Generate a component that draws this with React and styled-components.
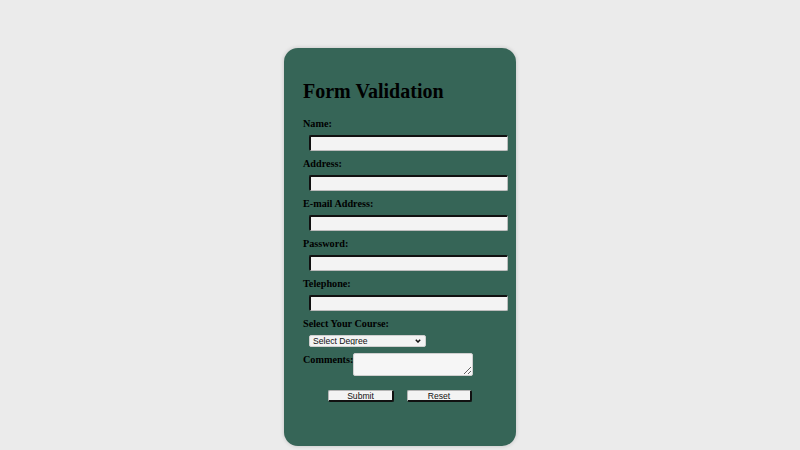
import React from "react"
import styled, { createGlobalStyle } from "styled-components"

const GlobalStyle = createGlobalStyle`
  html, body {
    margin: 0;
    padding: 0;
    background: #ebebeb;
  }
  body {
    font-family: "Liberation Serif", "Times New Roman", serif;
  }
`;

const Page = styled.div`
  display: flex;
  justify-content: center;
  padding-top: 48px;
  height: 450px;
  box-sizing: border-box;
  overflow: hidden;
`;

const Card = styled.form`
  width: 232px;
  height: 398px;
  box-sizing: border-box;
  background: #366557;
  border-radius: 14px;
  box-shadow: 0 0 4px rgba(0, 0, 0, 0.18);
  padding: 32px 8px 0 19px;
  display: flex;
  flex-direction: column;
`;

const Title = styled.h1`
  margin: 0 0 15px;
  font-size: 20px;
  line-height: 23px;
  font-weight: bold;
  color: #000;
`;

const Label = styled.label`
  display: block;
  font-size: 10.2px;
  line-height: 12px;
  font-weight: bold;
  color: #000;
  margin-bottom: 5px;
`;

const TextInput = styled.input`
  display: block;
  box-sizing: border-box;
  width: 199px;
  height: 16px;
  margin: 0 0 7px 6px;
  padding: 0 3px;
  background: #f3f3f3;
  border-style: solid;
  border-width: 2px 1px 1px 2px;
  border-color: #111 #bdbdbd #bdbdbd #111;
  border-radius: 2px;
  font-size: 9px;
`;

const SelectWrap = styled.div`
  position: relative;
  width: 117px;
  height: 12px;
  margin: 0 0 6px 6px;
`;

const Select = styled.select`
  display: block;
  box-sizing: border-box;
  width: 100%;
  height: 100%;
  margin: 0;
  padding: 0 0 0 3px;
  appearance: none;
  background: #f3f3f3;
  border: 1px solid #cfcfcf;
  border-radius: 2px;
  font-family: "Liberation Sans", Arial, sans-serif;
  font-size: 8.6px;
  line-height: 1;
  color: #111;
`;

const Chevron = styled.svg`
  position: absolute;
  right: 5px;
  top: 4px;
  width: 6px;
  height: 4px;
  pointer-events: none;
`;

const CommentRow = styled.div`
  display: flex;
  align-items: flex-start;
`;

const InlineLabel = styled(Label)`
  margin: 0;
  padding-top: 1px;
`;

const TextArea = styled.textarea`
  box-sizing: border-box;
  width: 120px;
  height: 23px;
  margin: 0;
  background: #f6f6f6;
  border: 1px solid #cfcfcf;
  border-radius: 2px;
`;

const Buttons = styled.div`
  display: flex;
  justify-content: center;
  gap: 13px;
  margin-top: 14px;
  padding-right: 11px;
`;

const Button = styled.button`
  box-sizing: border-box;
  width: ${(p) => p.$w}px;
  height: 12px;
  padding: 0;
  background: #f3f3f3;
  border-style: solid;
  border-width: 1px 2px 2px 1px;
  border-color: #b5b5b5 #111 #111 #b5b5b5;
  border-radius: 2px;
  font-family: "Liberation Sans", Arial, sans-serif;
  font-size: 8.6px;
  line-height: 8px;
  color: #111;
`;

const fields = ["Name:", "Address:", "E-mail Address:", "Password:", "Telephone:"];

export default function App() {
  return (
    <>
      <GlobalStyle />
      <Page>
        <Card onSubmit={(e) => e.preventDefault()}>
          <Title>Form Validation</Title>
          {fields.map((f) => (
            <div key={f}>
              <Label>{f}</Label>
              <TextInput type={f === "Password:" ? "password" : "text"} />
            </div>
          ))}
          <Label>Select Your Course:</Label>
          <SelectWrap>
            <Select defaultValue="">
              <option value="">Select Degree</option>
              <option>B.Tech</option>
              <option>M.Tech</option>
            </Select>
            <Chevron viewBox="0 0 6 4">
              <path d="M0.8 0.8 L3 3 L5.2 0.8" fill="none" stroke="#111" strokeWidth="1.5" />
            </Chevron>
          </SelectWrap>
          <CommentRow>
            <InlineLabel>Comments:</InlineLabel>
            <TextArea />
          </CommentRow>
          <Buttons>
            <Button type="submit" $w={66}>Submit</Button>
            <Button type="reset" $w={65}>Reset</Button>
          </Buttons>
        </Card>
      </Page>
    </>
  );
}
